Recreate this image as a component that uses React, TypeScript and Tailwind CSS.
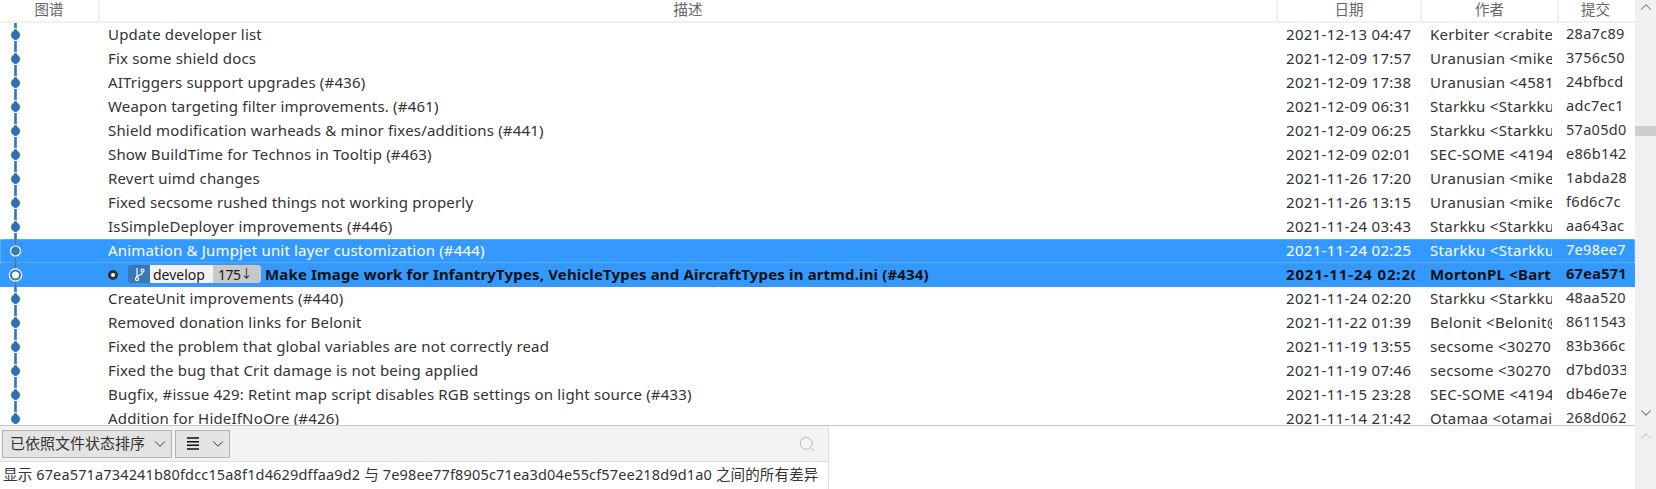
import { ChevronDown, ChevronUp, Search } from "lucide-react";

const rows = [
  ["Update developer list", "2021-12-13 04:47", "Kerbiter <crabiter", "28a7c89"],
  ["Fix some shield docs", "2021-12-09 17:57", "Uranusian <mike", "3756c50"],
  ["AITriggers support upgrades (#436)", "2021-12-09 17:38", "Uranusian <4581", "24bfbcd"],
  ["Weapon targeting filter improvements. (#461)", "2021-12-09 06:31", "Starkku <Starkku", "adc7ec1"],
  ["Shield modification warheads & minor fixes/additions (#441)", "2021-12-09 06:25", "Starkku <Starkku", "57a05d0"],
  ["Show BuildTime for Technos in Tooltip (#463)", "2021-12-09 02:01", "SEC-SOME <4194", "e86b142"],
  ["Revert uimd changes", "2021-11-26 17:20", "Uranusian <mike", "1abda28"],
  ["Fixed secsome rushed things not working properly", "2021-11-26 13:15", "Uranusian <mike", "f6d6c7c"],
  ["IsSimpleDeployer improvements (#446)", "2021-11-24 03:43", "Starkku <Starkku", "aa643ac"],
  ["Animation & Jumpjet unit layer customization (#444)", "2021-11-24 02:25", "Starkku <Starkku", "7e98ee7"],
  ["Make Image work for InfantryTypes, VehicleTypes and AircraftTypes in artmd.ini (#434)", "2021-11-24 02:20", "MortonPL <Bart", "67ea571"],
  ["CreateUnit improvements (#440)", "2021-11-24 02:20", "Starkku <Starkku", "48aa520"],
  ["Removed donation links for Belonit", "2021-11-22 01:39", "Belonit <Belonit@", "8611543"],
  ["Fixed the problem that global variables are not correctly read", "2021-11-19 13:55", "secsome <30270", "83b366c"],
  ["Fixed the bug that Crit damage is not being applied", "2021-11-19 07:46", "secsome <30270", "d7bd033"],
  ["Bugfix, #issue 429: Retint map script disables RGB settings on light source (#433)", "2021-11-15 23:28", "SEC-SOME <4194", "db46e7e"],
  ["Addition for HideIfNoOre (#426)", "2021-11-14 21:42", "Otamaa <otamai", "268d062"],
];

function Graph({ index }: { index: number }) {
  return (
    <svg width="30" height="24" className="block">
      <line x1="15.5" y1="0" x2="15.5" y2="24" stroke="#5f97cc" strokeWidth="3" strokeDasharray="11 1" strokeDashoffset="6" />
      <line x1="15.5" y1="0" x2="15.5" y2="24" stroke="#3a78b5" strokeWidth="1.5" strokeDasharray="11 1" strokeDashoffset="6" />
      {index === 9 ? (
        <circle cx="15.5" cy="12" r="5" fill="#3a78b5" stroke="#fff" strokeWidth="1.2" />
      ) : index === 10 ? (
        <>
          <circle cx="15.5" cy="12" r="6.2" fill="#3a78b5" stroke="#fff" strokeWidth="1.2" />
          <circle cx="15.5" cy="12" r="3.5" fill="#fff" />
        </>
      ) : (
        <circle cx="15.5" cy="12" r="4.5" fill="#2f71b5" />
      )}
    </svg>
  );
}

function BranchLabel() {
  return (
    <span className="mr-[4px] mb-[2px] flex h-[18px] shrink-0 items-center overflow-hidden rounded-[3px] text-[14px] font-normal tracking-normal text-[#1a1a1a]">
      <span className="flex h-full w-[22px] items-center justify-center bg-[#3a78b5]">
        <svg width="13" height="15" viewBox="0 0 13 15" fill="none" stroke="#fff" strokeWidth="1.2">
          <path d="M4 1v9" />
          <circle cx="4" cy="12" r="1.6" />
          <circle cx="9.5" cy="3.5" r="1.5" />
          <path d="M9.5 5c0 3.5-5.5 3-5.5 5" />
        </svg>
      </span>
      <span className="flex h-full w-[63px] items-center bg-[#f2f2f2] pl-[3px]">develop</span>
      <span className="flex h-full w-[48px] items-center bg-[#c8c8c8] pl-[5px]">
        <span className="tracking-[-0.5px]">175</span>
        <span className="text-[12px]">↓</span>
      </span>
    </span>
  );
}

export default function App() {
  return (
    <div
      className="flex h-[489px] w-[1656px] overflow-hidden bg-white text-[14.5px] text-[#333]"
      style={{ fontFamily: '"Noto Sans", "Noto Sans CJK SC", sans-serif' }}
    >
      <div className="flex w-[1635px] flex-col">
        <div className="flex h-[23px] shrink-0 border-b-2 border-[#f0f0f0] leading-[18px] text-[#666]">
          <div className="w-[100px] border-r-2 border-[#f0f0f0] text-center">图谱</div>
          <div className="w-[1178px] border-r-2 border-[#f0f0f0] text-center">描述</div>
          <div className="w-[144px] border-r-2 border-[#f0f0f0] text-center">日期</div>
          <div className="w-[137px] border-r-2 border-[#f0f0f0] text-center">作者</div>
          <div className="w-[75px] pr-[2px] text-center">提交</div>
        </div>
        <div className="h-[402px] overflow-hidden">
          {rows.map((row, i) => {
            const selected = i === 9 || i === 10;
            const bold = i === 10;
            const tone = bold
              ? "bg-[#3399ff] font-bold text-[#111]"
              : selected
                ? "rounded-[2px] bg-[#3399ff] text-white ring-1 ring-inset ring-[#5aabff]"
                : "";
            return (
              <div key={row[3]} className={`flex h-6 items-center whitespace-nowrap ${tone}`}>
                <div className="w-[108px] shrink-0">
                  <Graph index={i} />
                </div>
                <div
                  className={`flex w-[1178px] shrink-0 items-center overflow-hidden text-[15px] ${bold ? "tracking-[0.15px]" : "tracking-[0.18px]"}`}
                >
                  {bold ? (
                    <>
                      <span className="mr-[10px] h-[10px] w-[10px] shrink-0 rounded-full border-[3px] border-[#333] bg-white" />
                      <BranchLabel />
                    </>
                  ) : null}
                  <span className="pb-[2px]">{row[0]}</span>
                </div>
                <div className={`w-[129px] shrink-0 overflow-hidden pb-[2px] text-[15px] ${bold ? "tracking-[0.85px]" : "tracking-[0.3px]"}`}>
                  {row[1]}
                </div>
                <div className="w-[15px] shrink-0" />
                <div className={`w-[122px] shrink-0 overflow-hidden pb-[2px] text-[15px] ${bold ? "tracking-[0.2px]" : "tracking-[0.3px]"}`}>
                  {row[2]}
                </div>
                <div className="w-[14px] shrink-0" />
                <div className="w-[60px] shrink-0 overflow-hidden pb-[2px] tracking-[0.3px]">{row[3]}</div>
              </div>
            );
          })}
        </div>
        <div className="flex min-h-0 flex-1 border-t border-[#c8c8c8]">
          <div className="flex w-[829px] shrink-0 flex-col border-r border-[#ddd]">
            <div className="flex h-[36px] shrink-0 items-center gap-[3px] border-b border-[#ddd] bg-[#f3f3f3] pl-[2px] pr-[12px]">
              <button className="flex h-[28px] w-[170px] items-center justify-between border border-[#b4b4b4] bg-[#e3e3e3] pl-[7px] pr-[2px] text-[15px]">
                <span>已依照文件状态排序</span>
                <ChevronDown size={18} strokeWidth={1.3} />
              </button>
              <button className="flex h-[28px] w-[55px] items-center justify-between border border-[#b4b4b4] bg-[#e3e3e3] pl-[11px] pr-[2px]">
                <svg width="12" height="13" viewBox="0 0 12 13" stroke="#111" strokeWidth="1.5">
                  <path d="M0 1h12M0 4.7h12M0 8.3h12M0 12h12" />
                </svg>
                <ChevronDown size={18} strokeWidth={1.3} />
              </button>
              <Search size={18} strokeWidth={1.2} className="ml-auto text-[#b5b5b5]" />
            </div>
            <div className="h-[27px] whitespace-nowrap px-[3px] leading-[24px] tracking-[0.15px]">
              显示 67ea571a734241b80fdcc15a8f1d4629dffaa9d2 与 7e98ee77f8905c71ea3d04e55cf57ee218d9d1a0 之间的所有差异
            </div>
          </div>
        </div>
      </div>
      <div className="flex w-[21px] flex-col items-center bg-[#f0f0f0]">
        <ChevronUp size={18} strokeWidth={1.4} className="-mt-[2px] text-[#777]" />
        <div className="mt-[110px] h-[10px] w-full shrink-0 bg-[#cdcdcd]" />
        <ChevronDown size={18} strokeWidth={1.4} className="mt-[268px] text-[#666]" />
        <ChevronUp size={18} strokeWidth={1.4} className="mt-[5px] text-[#c8c8c8]" />
      </div>
    </div>
  );
}
